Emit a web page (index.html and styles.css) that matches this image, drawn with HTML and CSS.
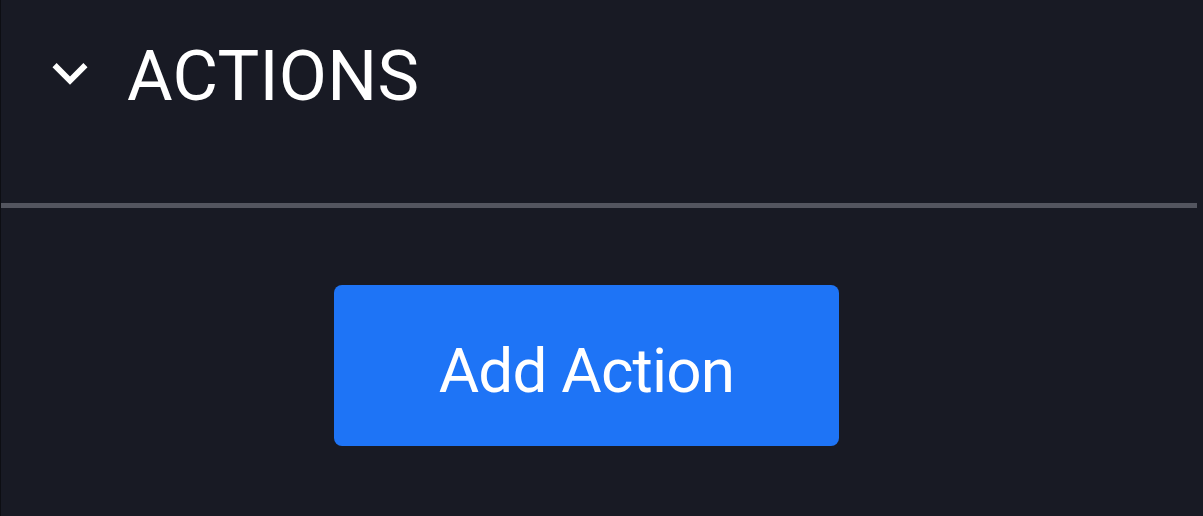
FILE: index.html
```html
<!DOCTYPE html>
<html lang="en">
<head>
    <meta charset="UTF-8">
    <meta name="viewport" content="width=device-width, initial-scale=1.0">
    <title>Actions</title>
    <link rel="stylesheet" href="styles.css">
</head>
<body>
    <div class="panel">
        <div class="panel-header">
            <svg class="chevron" viewBox="0 0 24 24" aria-hidden="true">
                <path d="M16.59 8.59L12 13.17 7.41 8.59 6 10l6 6 6-6z"/>
            </svg>
            <h2 class="panel-title">ACTIONS</h2>
        </div>

        <hr class="divider">

        <div class="panel-body">
            <button type="button" class="btn">Add Action</button>
        </div>
    </div>
</body>
</html>
```

FILE: styles.css
```css
:root {
    --bg: #181a24;
    --edge: #0d0e13;
    --line: #53555f;
    --primary: #1e74f6;
    --text: #ffffff;
}

* {
    margin: 0;
    padding: 0;
    box-sizing: border-box;
    font-family: Roboto, 'Liberation Sans', sans-serif;
}

html, body {
    height: 100%;
}

body {
    background-color: var(--bg);
    color: var(--text);
}

.panel {
    min-height: 100%;
    border-left: 1px solid var(--edge);
}

.panel-header {
    display: flex;
    align-items: flex-start;
    height: 203px;
    padding: 38px 0 0 34px;
    gap: 22px;
}

.chevron {
    width: 70px;
    height: 70px;
    fill: var(--text);
    flex-shrink: 0;
}

.panel-title {
    font-size: 70px;
    font-weight: 400;
    line-height: 70px;
    margin-top: 3px;
    letter-spacing: 0.3px;
}

.divider {
    border: none;
    height: 5px;
    background-color: var(--line);
    margin-right: 6px;
}

.panel-body {
    padding: 77px 0 0 333px;
}

.btn {
    display: flex;
    align-items: center;
    justify-content: center;
    width: 505px;
    height: 161px;
    padding-top: 9px;
    background-color: var(--primary);
    color: var(--text);
    border: none;
    border-radius: 8px;
    font-size: 62px;
    font-weight: 400;
    letter-spacing: -0.8px;
    cursor: pointer;
}
```
